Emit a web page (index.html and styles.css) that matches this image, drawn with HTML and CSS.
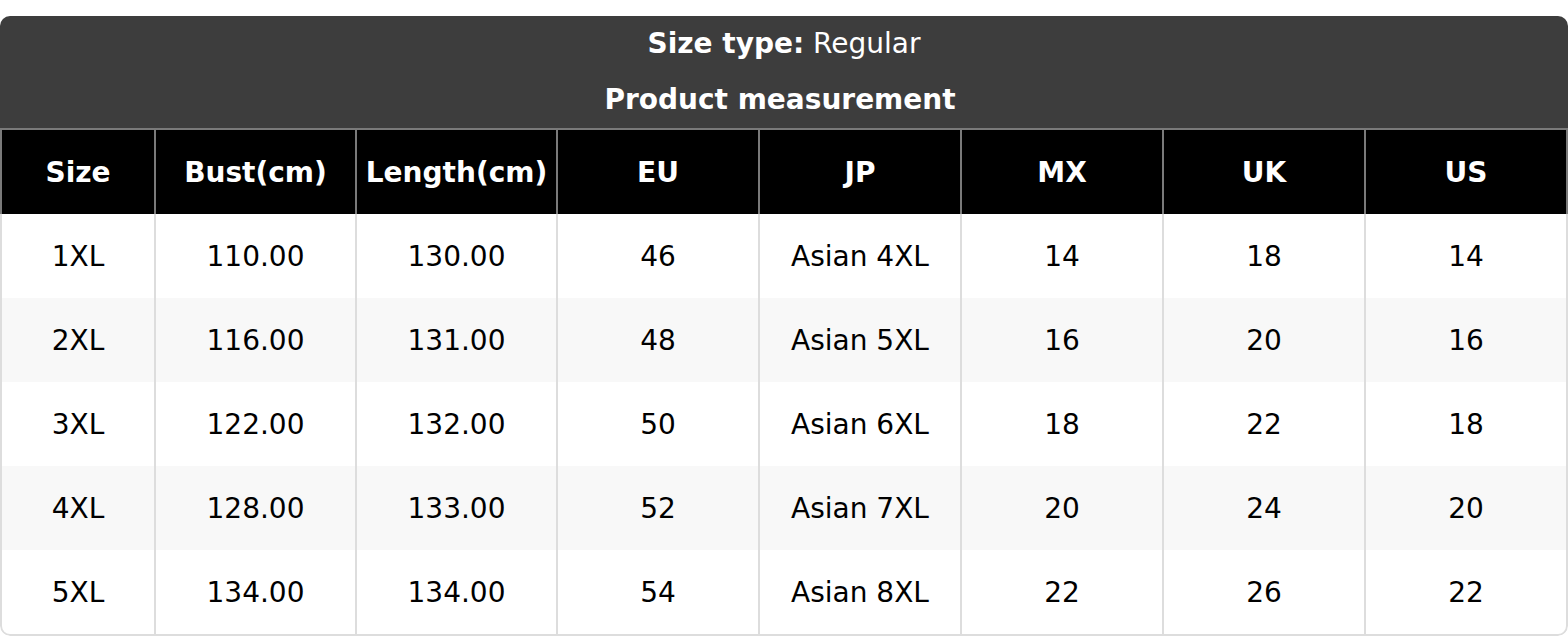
FILE: index.html
```html
<!DOCTYPE html>
<html>
<head>
<meta charset="utf-8">
<link rel="stylesheet" href="styles.css">
</head>
<body>
<div class="chart">
  <div class="title">
    <div class="line"><b>Size type:</b> Regular</div>
    <div class="line line-sub"><b>Product measurement</b></div>
  </div>
  <table class="grid">
    <thead>
      <tr>
        <th class="c1">Size</th>
        <th class="c2">Bust(cm)</th>
        <th class="c2">Length(cm)</th>
        <th class="c3">EU</th>
        <th class="c3">JP</th>
        <th class="c3">MX</th>
        <th class="c3">UK</th>
        <th class="c3">US</th>
      </tr>
    </thead>
    <tbody>
      <tr><td>1XL</td><td>110.00</td><td>130.00</td><td>46</td><td>Asian 4XL</td><td>14</td><td>18</td><td>14</td></tr>
      <tr><td>2XL</td><td>116.00</td><td>131.00</td><td>48</td><td>Asian 5XL</td><td>16</td><td>20</td><td>16</td></tr>
      <tr><td>3XL</td><td>122.00</td><td>132.00</td><td>50</td><td>Asian 6XL</td><td>18</td><td>22</td><td>18</td></tr>
      <tr><td>4XL</td><td>128.00</td><td>133.00</td><td>52</td><td>Asian 7XL</td><td>20</td><td>24</td><td>20</td></tr>
      <tr><td>5XL</td><td>134.00</td><td>134.00</td><td>54</td><td>Asian 8XL</td><td>22</td><td>26</td><td>22</td></tr>
    </tbody>
  </table>
</div>
</body>
</html>
```

FILE: styles.css
```css
html, body {
  margin: 0;
  padding: 0;
  background: #ffffff;
}
body {
  padding-top: 16px;
  font-family: "DejaVu Sans", "Liberation Sans", sans-serif;
}
.chart {
  width: 1568px;
  border-radius: 10px;
  overflow: hidden;
}
.title {
  background: #3d3d3d;
  color: #ffffff;
  text-align: center;
  font-size: 28px;
}
.title .line {
  height: 56px;
  line-height: 56px;
}
.title .line-sub {
  padding-right: 8px;
}
.title b {
  font-weight: bold;
}
.grid {
  width: 1568px;
  table-layout: fixed;
  border-collapse: separate;
  border-spacing: 0;
  font-size: 28px;
}
.grid th,
.grid td {
  box-sizing: border-box;
  padding: 0;
  text-align: center;
  vertical-align: middle;
}
.grid th {
  background: #000000;
  color: #ffffff;
  font-weight: bold;
  height: 86px;
  border-top: 2px solid #7a7a7a;
  border-right: 2px solid #7a7a7a;
}
.grid th:first-child {
  border-left: 2px solid #7a7a7a;
}
.grid th.c1 { width: 156px; }
.grid th.c2 { width: 201px; }
.grid th.c3 { width: 202px; }
.grid td {
  height: 84px;
  color: #000000;
  border-right: 2px solid #dddddd;
  background: #ffffff;
}
.grid td:first-child {
  border-left: 2px solid #dddddd;
}
.grid tbody tr:nth-child(even) td {
  background: #f8f8f8;
}
.grid tbody tr:last-child td {
  height: 86px;
  border-bottom: 2px solid #dddddd;
}
.grid tbody tr:last-child td:first-child {
  border-bottom-left-radius: 10px;
}
.grid tbody tr:last-child td:last-child {
  border-bottom-right-radius: 10px;
}
```
